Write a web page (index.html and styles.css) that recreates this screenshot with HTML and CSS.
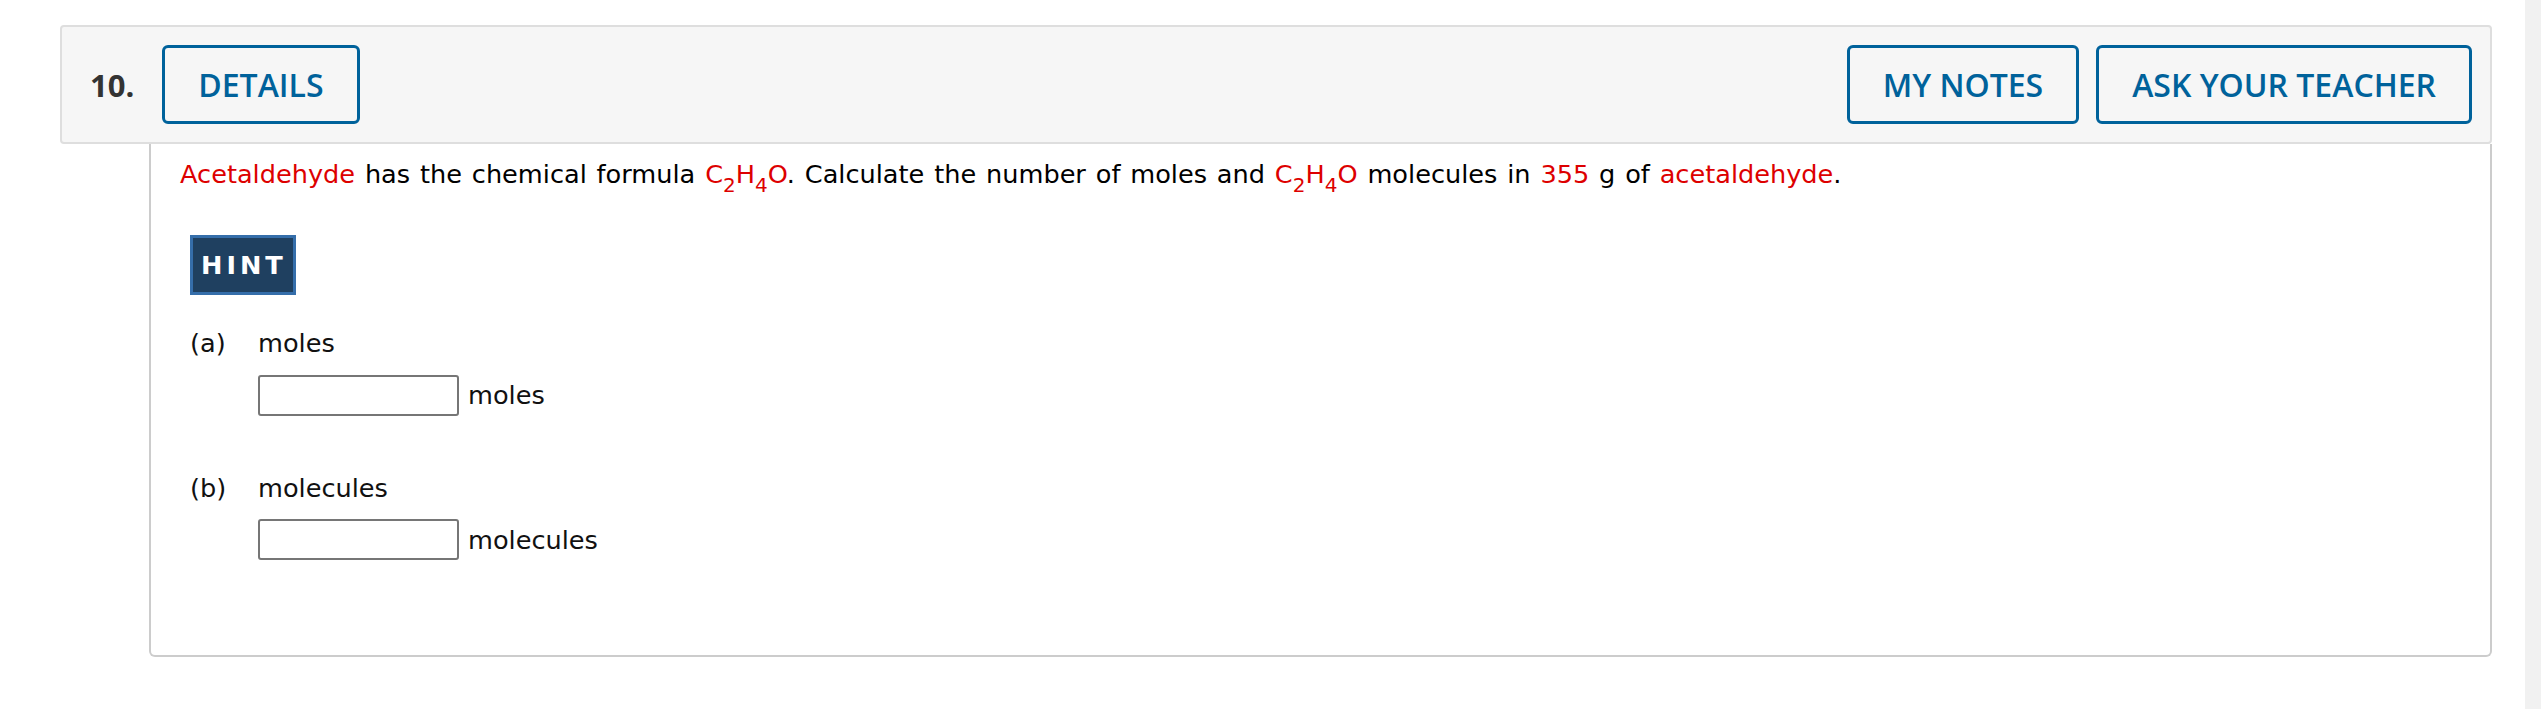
FILE: index.html
```html
<!DOCTYPE html>
<html lang="en">
<head>
<meta charset="utf-8">
<title>Question 10</title>
<link rel="stylesheet" href="styles.css">
</head>
<body>
<div class="viewport">
  <main class="page">
    <section class="question">
      <header class="q-head">
        <span class="q-num">10.</span>
        <button class="btn" type="button">DETAILS</button>
        <div class="spacer"></div>
        <div class="head-actions">
          <button class="btn" type="button">MY NOTES</button>
          <button class="btn" type="button">ASK YOUR TEACHER</button>
        </div>
      </header>
      <div class="q-body">
        <p class="prompt"><span class="red">Acetaldehyde</span> has the chemical formula <span class="red">C<sub class="sub">2</sub>H<sub class="sub">4</sub>O</span>. Calculate the number of moles and <span class="red">C<sub class="sub">2</sub>H<sub class="sub">4</sub>O</span> molecules in <span class="red">355</span> g of <span class="red">acetaldehyde</span>.</p>
        <div class="parts">
          <button class="hint" type="button">HINT</button>
          <div class="part part-first">
            <span class="part-label">(a)</span>
            <div class="part-main">
              <div class="part-title">moles</div>
              <div class="answer">
                <input class="ans-input" type="text" aria-label="moles">
                <span class="unit">moles</span>
              </div>
            </div>
          </div>
          <div class="part">
            <span class="part-label">(b)</span>
            <div class="part-main">
              <div class="part-title">molecules</div>
              <div class="answer">
                <input class="ans-input" type="text" aria-label="molecules">
                <span class="unit">molecules</span>
              </div>
            </div>
          </div>
        </div>
      </div>
    </section>
  </main>
  <div class="scroll-track"></div>
</div>
</body>
</html>
```

FILE: styles.css
```css
* {
  box-sizing: border-box;
}

html, body {
  margin: 0;
  padding: 0;
  background: #ffffff;
}

body {
  font-family: "DejaVu Sans", Verdana, sans-serif;
  font-size: 25.6px;
  color: #000000;
}

.viewport {
  display: flex;
  height: 709px;
  overflow: hidden;
}

.page {
  flex: 1;
  min-width: 0;
}

.scroll-track {
  width: 16px;
  flex: none;
  background: #f1f1f1;
}

.question {
  margin: 25px 33px 0 60px;
}

.q-head {
  display: flex;
  align-items: center;
  height: 119px;
  padding: 0 18px 0 28px;
  background: #f6f6f6;
  border: 2px solid #dedede;
  border-radius: 4px;
}

.q-num {
  font-family: "Open Sans", "DejaVu Sans", sans-serif;
  font-weight: 700;
  font-size: 31px;
  color: #333333;
  margin-right: 28px;
}

.spacer {
  flex: 1;
}

.head-actions {
  display: flex;
  gap: 17px;
}

.btn {
  height: 79px;
  padding: 0 33px;
  background: transparent;
  border: 3px solid #00629b;
  border-radius: 6px;
  color: #00629b;
  font-family: "Open Sans", "DejaVu Sans", sans-serif;
  font-weight: 600;
  font-size: 32px;
  line-height: 1;
  cursor: pointer;
}

.q-body {
  margin-left: 89px;
  padding: 11px 29px 95px 29px;
  border: 2px solid #cccccc;
  border-top: none;
  border-radius: 0 0 6px 6px;
  line-height: 38.4px;
}

.prompt {
  margin: 0;
  word-spacing: 1.7px;
}

.red {
  color: #dd0000;
}

.sub {
  font-size: 20px;
  line-height: 0;
  vertical-align: -9px;
}

.parts {
  padding-left: 10px;
}

.hint {
  display: block;
  height: 60px;
  margin-top: 42px;
  padding: 0 6px 0 8px;
  background: #1f4060;
  border: 3px solid #356eaa;
  color: #ffffff;
  font-family: "DejaVu Sans", Verdana, sans-serif;
  font-weight: 700;
  font-size: 25.6px;
  letter-spacing: 4px;
  cursor: pointer;
}

.part {
  display: flex;
  margin-top: 53px;
}

.part-first {
  margin-top: 29px;
}

.part-label {
  width: 68px;
  flex: none;
  color: #111111;
}

.part-main {
  display: flex;
  flex-direction: column;
}

.part-title {
  color: #111111;
}

.answer {
  display: flex;
  align-items: center;
  gap: 9px;
  margin-top: 12px;
}

.ans-input {
  width: 201px;
  height: 41px;
  margin: 0;
  border: 2px solid #767676;
  border-radius: 3px;
  background: #ffffff;
  font: inherit;
  padding: 0 6px;
}

.unit {
  color: #111111;
}
```
